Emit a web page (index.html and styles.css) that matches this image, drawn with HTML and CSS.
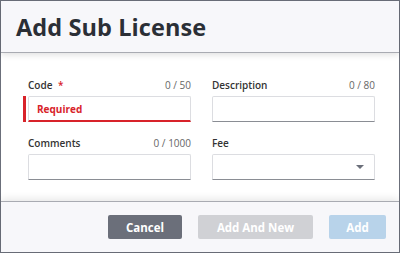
FILE: index.html
```html
<!DOCTYPE html>
<html lang="en">
<head>
    <meta charset="UTF-8">
    <title>Add Sub License</title>
    <link rel="stylesheet" href="styles.css">
</head>
<body>
    <div class="dialog">
        <div class="dialog-header">
            <h1>Add Sub License</h1>
        </div>

        <div class="dialog-body">
            <div class="field">
                <div class="field-label">
                    <span>Code <span class="req">*</span></span>
                    <span class="count">0 / 50</span>
                </div>
                <div class="input-wrap error">
                    <div class="input"><span class="error-text">Required</span></div>
                </div>
            </div>
            <div class="field">
                <div class="field-label">
                    <span>Description</span>
                    <span class="count">0 / 80</span>
                </div>
                <div class="input-wrap">
                    <div class="input"></div>
                </div>
            </div>
            <div class="field">
                <div class="field-label">
                    <span>Comments</span>
                    <span class="count">0 / 1000</span>
                </div>
                <div class="input-wrap">
                    <div class="input"></div>
                </div>
            </div>
            <div class="field">
                <div class="field-label">
                    <span>Fee</span>
                </div>
                <div class="input-wrap">
                    <div class="input select">
                        <svg class="caret" width="8" height="4" viewBox="0 0 8 4"><path d="M0 0h8L4 4z" fill="#6b6f7a"/></svg>
                    </div>
                </div>
            </div>
        </div>

        <div class="dialog-footer">
            <button class="btn btn-cancel">Cancel</button>
            <button class="btn btn-disabled">Add And New</button>
            <button class="btn btn-primary">Add</button>
        </div>
    </div>
</body>
</html>
```

FILE: styles.css
```css
* {
    box-sizing: border-box;
}
body {
    margin: 0;
    font-family: 'Open Sans', 'Noto Sans', sans-serif;
    color: #2b2f36;
}
.dialog {
    width: 400px;
    height: 253px;
    border: 1px solid #6b6f7a;
    display: flex;
    flex-direction: column;
    background: #fff;
}
.dialog-header {
    height: 52px;
    background: #f7f7fa;
    border-bottom: 1px solid #a9abb2;
    box-shadow: 0 2px 6px rgba(0, 0, 0, 0.12);
    padding-left: 15px;
    display: flex;
    align-items: center;
    position: relative;
}
h1 {
    margin: 0;
    font-size: 23.5px;
    font-weight: 700;
    color: #2b2f36;
    letter-spacing: 0.1px;
}
.dialog-body {
    flex: 1;
    display: grid;
    grid-template-columns: 163px 163px;
    column-gap: 21px;
    row-gap: 14px;
    padding: 25px 0 0 27px;
    align-content: start;
}
.field-label {
    display: flex;
    justify-content: space-between;
    font-size: 10px;
    font-weight: 600;
    color: #333;
    height: 15px;
    line-height: 15px;
    margin-bottom: 3px;
}
.req {
    color: #d8232a;
    margin-left: 3px;
}
.count {
    font-weight: 400;
    color: #666;
}
.input-wrap.error {
    margin-left: -5px;
    border-left: 3px solid #d8232a;
    padding-left: 2px;
}
.input {
    height: 26px;
    border: 1px solid #dcdde1;
    border-bottom: 1px solid #8a8d94;
    border-radius: 2px 2px 0 0;
    background: #fff;
    display: flex;
    align-items: center;
    padding: 0 8px;
}
.input-wrap.error .input {
    border-bottom: 2px solid #d8232a;
}
.error-text {
    color: #d8232a;
    font-size: 10px;
    font-weight: 700;
}
.select {
    justify-content: flex-end;
    padding-right: 10px;
}
.dialog-footer {
    height: 51px;
    background: #f7f7fa;
    border-top: 1px solid #a9abb2;
    box-shadow: 0 -2px 8px rgba(0, 0, 0, 0.1);
    display: flex;
    justify-content: flex-end;
    align-items: center;
    gap: 16px;
    padding-right: 13px;
}
.btn {
    height: 24px;
    border: none;
    border-radius: 2px;
    color: #fff;
    font-family: 'Open Sans', 'Noto Sans', sans-serif;
    font-size: 11.5px;
    font-weight: 700;
    padding: 0;
}
.btn-cancel {
    width: 74px;
    background: #6b6f7a;
}
.btn-disabled {
    width: 115px;
    background: #d0d1d5;
}
.btn-primary {
    width: 57px;
    background: #b8d3ea;
}
```
